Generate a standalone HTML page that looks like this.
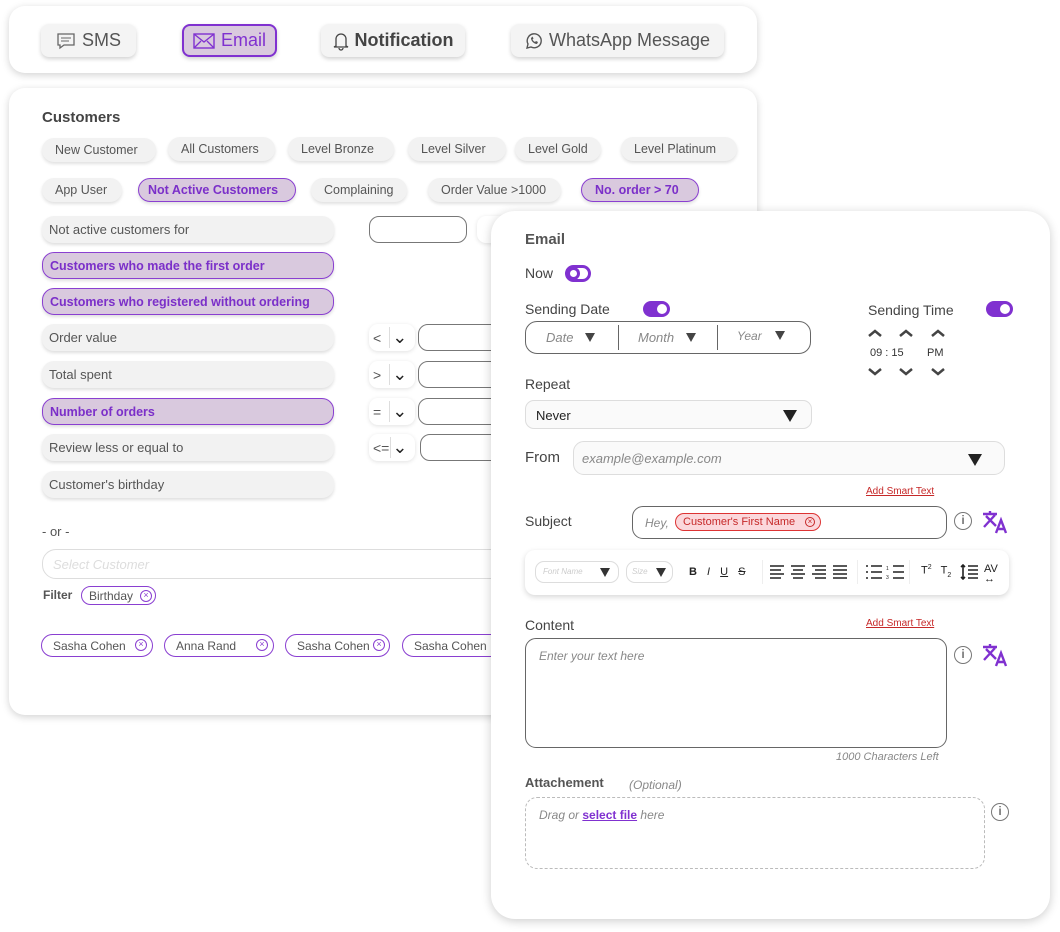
<!DOCTYPE html>
<html><head><meta charset="utf-8"><style>
*{box-sizing:border-box;margin:0;padding:0}
body{width:1060px;height:932px;background:#fff;font-family:"Liberation Sans",sans-serif;position:relative;overflow:hidden;color:#444}
.a{position:absolute}
.card{position:absolute;background:#fff;border-radius:16px;box-shadow:0 2px 8px rgba(0,0,0,.18)}
.tb{position:absolute;top:24px;height:33px;border-radius:8px;background:#f4f4f4;box-shadow:0 2px 4px rgba(0,0,0,.18);font-size:18px;color:#555;display:flex;align-items:center;justify-content:center;gap:6px}
.chip{position:absolute;height:24px;border-radius:12px;background:#f2f2f2;box-shadow:0 2px 3px rgba(0,0,0,.12);font-size:12.5px;color:#555;display:flex;align-items:center;padding-left:13px}
.row{position:absolute;left:42px;width:292px;height:27px;border-radius:12px;background:#f2f2f2;box-shadow:0 2px 3px rgba(0,0,0,.13);font-size:13px;color:#555;padding-left:7px;display:flex;align-items:center}
.sel{background:#d9c9de !important;border:1.5px solid #8a3fd1;color:#7b2fc9 !important;font-weight:bold;font-size:12.5px !important}
.op{position:absolute;left:369px;width:46px;height:27px;border-radius:9px;background:#fff;box-shadow:0 1px 4px rgba(0,0,0,.12);font-size:14px;color:#555;padding-left:4px;display:flex;align-items:center}
.inp{position:absolute;left:418px;width:90px;height:27px;border:1px solid #777;border-radius:10px}
.pc{position:absolute;top:634px;height:23px;border:1.5px solid #8a3fd1;border-radius:12px;font-size:12px;color:#555;padding-left:11px;display:flex;align-items:center}
.x{position:absolute;width:12px;height:12px;border:1.3px solid #8a3fd1;border-radius:50%;font-size:9px;line-height:9px;text-align:center;color:#8a3fd1}
.lbl{position:absolute;font-size:14px;color:#444}
.tog{position:absolute;width:27px;height:16px;border-radius:8px;background:#8031d0}
.tog:after{content:"";position:absolute;right:3px;top:3px;width:10px;height:10px;border-radius:50%;background:#fff}
.info{position:absolute;width:18px;height:18px;border:1.5px solid #777;border-radius:50%;font-size:12px;color:#777;text-align:center;line-height:15px;font-weight:bold}
.smart{position:absolute;font-size:10px;color:#c62828;text-decoration:underline}
.tri{display:inline-block;width:0;height:0;border-left:5px solid transparent;border-right:5px solid transparent;border-top:9px solid #333}
.al{position:absolute;top:566px}
</style></head><body>

<div class="card" style="left:9px;top:6px;width:748px;height:67px"></div>
<div class="tb" style="left:41px;width:95px"><svg width="20" height="18" viewBox="0 0 20 18"><path d="M2 2h16v11H8l-4 3v-3H2z" fill="none" stroke="#666" stroke-width="1.3"/><path d="M5 6h10M5 9h8" stroke="#666"/></svg>SMS</div>
<div class="tb" style="left:182px;width:95px;background:#d9c9de;border:2px solid #8031d0;color:#8031d0"><svg width="22" height="16" viewBox="0 0 22 16"><rect x="1" y="1" width="20" height="14" fill="none" stroke="#8031d0" stroke-width="1.4"/><path d="M1 1l10 8 10-8M1 15l7-7M21 15l-7-7" fill="none" stroke="#8031d0" stroke-width="1.3"/></svg>Email</div>
<div class="tb" style="left:321px;width:144px;font-weight:bold;color:#444"><svg width="16" height="20" viewBox="0 0 16 20"><path d="M3 15V8a5 5 0 0110 0v7l2 1H1zM6 17a2 2 0 004 0" fill="none" stroke="#444" stroke-width="1.3"/></svg>Notification</div>
<div class="tb" style="left:511px;width:213px"><svg width="18" height="18" viewBox="0 0 18 18"><path d="M2 16l1-4a7 7 0 113 3z" fill="none" stroke="#555" stroke-width="1.4"/><path d="M6 6c0 3 3 6 6 6l1-2-2-1-1 1c-1-.5-2-1.5-2.5-2.5l1-1-1-2z" fill="#555"/></svg>WhatsApp Message</div>

<div class="card" style="left:9px;top:88px;width:748px;height:627px"></div>
<div class="a" style="left:42px;top:109px;font-size:15px;font-weight:bold;color:#444">Customers</div>
<div class="chip" style="left:42px;top:138px;width:114px">New Customer</div>
<div class="chip" style="left:168px;top:137px;width:107px">All Customers</div>
<div class="chip" style="left:288px;top:137px;width:106px">Level Bronze</div>
<div class="chip" style="left:408px;top:137px;width:98px">Level Silver</div>
<div class="chip" style="left:515px;top:137px;width:86px">Level Gold</div>
<div class="chip" style="left:621px;top:137px;width:116px">Level Platinum</div>
<div class="chip" style="left:42px;top:178px;width:80px">App User</div>
<div class="chip sel" style="left:138px;top:178px;width:158px;padding-left:9px">Not Active Customers</div>
<div class="chip" style="left:311px;top:178px;width:96px">Complaining</div>
<div class="chip" style="left:428px;top:178px;width:133px">Order Value &gt;1000</div>
<div class="chip sel" style="left:581px;top:178px;width:118px">No. order &gt; 70</div>

<div class="row" style="top:216px">Not active customers for</div>
<div class="row sel" style="top:252px">Customers who made the first order</div>
<div class="row sel" style="top:288px">Customers who registered without ordering</div>
<div class="row" style="top:324px">Order value</div>
<div class="row" style="top:361px">Total spent</div>
<div class="row sel" style="top:398px">Number of orders</div>
<div class="row" style="top:434px">Review less or equal to</div>
<div class="row" style="top:471px">Customer's birthday</div>

<div class="a" style="left:369px;top:216px;width:98px;height:27px;border:1px solid #777;border-radius:10px"></div>
<div class="a" style="left:477px;top:216px;width:30px;height:27px;border-radius:9px;background:#fff;box-shadow:0 1px 4px rgba(0,0,0,.12)"></div>
<div class="op" style="top:324px">&lt; <span style="margin-left:8px;border-left:1px solid #ddd;padding-left:2px;font-size:18px;color:#222">&#x2304;</span></div>
<div class="op" style="top:361px">&gt; <span style="margin-left:8px;border-left:1px solid #ddd;padding-left:2px;font-size:18px;color:#222">&#x2304;</span></div>
<div class="op" style="top:398px">= <span style="margin-left:8px;border-left:1px solid #ddd;padding-left:2px;font-size:18px;color:#222">&#x2304;</span></div>
<div class="op" style="top:434px">&lt;=<span style="margin-left:1px;border-left:1px solid #ddd;padding-left:1px;font-size:18px;color:#222">&#x2304;</span></div>
<div class="inp" style="top:324px"></div>
<div class="inp" style="top:361px"></div>
<div class="inp" style="top:398px"></div>
<div class="inp" style="top:434px;left:420px"></div>

<div class="a" style="left:42px;top:524px;font-size:13px;color:#555">- or -</div>
<div class="a" style="left:42px;top:549px;width:470px;height:30px;border:1px solid #ddd;border-radius:14px;font-size:13px;color:#ddd;font-style:italic;padding:7px 10px">Select Customer</div>
<div class="a" style="left:43px;top:588px;font-size:12px;font-weight:bold;color:#555">Filter</div>
<div class="pc" style="left:81px;top:586px;width:75px;height:19px;padding-left:7px">Birthday<span class="x" style="left:58px;top:3px">×</span></div>
<div class="pc" style="left:41px;width:112px">Sasha Cohen<span class="x" style="left:93px;top:4px">×</span></div>
<div class="pc" style="left:164px;width:110px">Anna Rand<span class="x" style="left:91px;top:4px">×</span></div>
<div class="pc" style="left:285px;width:105px">Sasha Cohen<span class="x" style="left:87px;top:4px">×</span></div>
<div class="pc" style="left:402px;width:100px">Sasha Cohen</div>

<div class="card" style="left:491px;top:211px;width:559px;height:708px;border-radius:24px;box-shadow:0 2px 10px rgba(0,0,0,.2)"></div>
<div class="a" style="left:525px;top:231px;font-size:15px;font-weight:bold;color:#555">Email</div>
<div class="lbl" style="left:525px;top:265px">Now</div>
<div class="a" style="left:565px;top:265px;width:26px;height:17px;border:3px solid #8031d0;border-radius:9px"><div style="position:absolute;left:-1px;top:-1px;width:13px;height:13px;border:3px solid #8031d0;border-radius:50%"></div></div>
<div class="lbl" style="left:525px;top:301px">Sending Date</div>
<div class="tog" style="left:643px;top:301px"></div>
<div class="a" style="left:525px;top:321px;width:286px;height:33px;border:1.3px solid #666;border-radius:12px;font-size:13px;color:#888;font-style:italic">
<span class="a" style="left:20px;top:8px">Date <span class="tri" style="margin-left:8px;border-top-color:#444"></span></span>
<span class="a" style="left:92px;top:3px;height:25px;border-left:1.3px solid #666"></span>
<span class="a" style="left:112px;top:8px">Month <span class="tri" style="margin-left:8px;border-top-color:#444"></span></span>
<span class="a" style="left:191px;top:3px;height:25px;border-left:1.3px solid #666"></span>
<span class="a" style="left:211px;top:7px;font-size:12px">Year <span class="tri" style="margin-left:10px;border-top-color:#444"></span></span>
</div>
<div class="lbl" style="left:868px;top:302px">Sending Time</div>
<div class="tog" style="left:986px;top:301px"></div>
<svg class="a" style="left:866px;top:326px" width="90" height="52" viewBox="0 0 90 52"><g fill="none" stroke="#444" stroke-width="2.5"><path d="M3 10l6-5 6 5M34 10l6-5 6 5M66 10l6-5 6 5M3 43l6 5 6-5M34 43l6 5 6-5M66 43l6 5 6-5"/></g><text x="4" y="30" font-size="11" font-family="Liberation Sans" fill="#333">09  :  15</text><text x="61" y="30" font-size="11" font-family="Liberation Sans" fill="#333">PM</text></svg>
<div class="lbl" style="left:525px;top:376px">Repeat</div>
<div class="a" style="left:525px;top:400px;width:287px;height:29px;border:1px solid #ddd;border-radius:9px;background:#fafafa;font-size:13px;color:#222;padding:7px 10px">Never<span class="tri" style="position:absolute;right:14px;top:9px;border-width:12px 7px 0;border-top-color:#222"></span></div>
<div class="lbl" style="left:525px;top:449px;font-size:15px">From</div>
<div class="a" style="left:573px;top:441px;width:432px;height:34px;border:1px solid #ddd;border-radius:11px;background:#fafafa;font-size:13px;color:#888;font-style:italic;padding:9px 8px">example@example.com<span class="tri" style="position:absolute;right:22px;top:12px;border-width:12px 7px 0;border-top-color:#222"></span></div>
<div class="smart" style="left:866px;top:486px">Add Smart Text</div>
<div class="lbl" style="left:525px;top:513px">Subject</div>
<div class="a" style="left:632px;top:506px;width:315px;height:33px;border:1.3px solid #666;border-radius:11px;font-size:12px;color:#888;font-style:italic;padding:9px 12px">Hey,</div>
<div class="a" style="left:675px;top:513px;width:146px;height:18px;border:1px solid #d33;border-radius:9px;background:#fbd8dc;font-size:11px;color:#c62828;padding:2px 7px">Customer's First Name<span style="position:absolute;right:5px;top:3px;width:10px;height:10px;border:1px solid #c62828;border-radius:50%;font-size:8px;line-height:8px;text-align:center">×</span></div>
<div class="info" style="left:954px;top:512px">i</div>
<svg class="a" style="left:982px;top:510px" width="28" height="24" viewBox="0 0 28 24"><g fill="none" stroke="#8031d0" stroke-width="2.4"><path d="M1 4h14M8 1v3M2 17l11-12M4 6l10 10"/><path d="M14 23l5-13 5 13M16 19h7"/></g></svg>
<div class="a" style="left:525px;top:550px;width:484px;height:45px;border-radius:10px;background:#fff;box-shadow:0 2px 6px rgba(0,0,0,.16)"></div>
<div class="a" style="left:535px;top:561px;width:84px;height:22px;border:1px solid #ddd;border-radius:9px;font-size:8px;color:#ccc;font-style:italic;padding:5px 7px">Font Name<span class="tri" style="position:absolute;right:8px;top:6px;border-width:9px 5px 0"></span></div>
<div class="a" style="left:626px;top:561px;width:47px;height:22px;border:1px solid #ddd;border-radius:9px;font-size:8px;color:#ccc;font-style:italic;padding:5px 5px">Size<span class="tri" style="position:absolute;right:6px;top:6px;border-width:9px 5px 0"></span></div>
<div class="a" style="left:689px;top:566px;font-size:11px;color:#222;word-spacing:7px"><b>B</b> <i>I</i> <u>U</u> <s>S</s></div>
<div class="a" style="left:762px;top:560px;height:24px;border-left:1px solid #eee"></div>
<svg class="a" style="left:770px;top:565px" width="80" height="14" viewBox="0 0 80 14"><g stroke="#222" stroke-width="1.6"><path d="M0 1h14M0 5h11M0 9h14M0 13h11"/><path d="M21 1h14M23 5h10M21 9h14M23 13h10"/><path d="M42 1h14M45 5h11M42 9h14M45 13h11"/><path d="M63 1h14M63 5h14M63 9h14M63 13h14"/></g></svg>
<div class="a" style="left:857px;top:560px;height:24px;border-left:1px solid #eee"></div>
<svg class="a" style="left:866px;top:565px" width="40" height="14" viewBox="0 0 40 14"><g stroke="#222" stroke-width="1.6"><path d="M0 1h2M0 7h2M0 13h2M5 1h11M5 7h11M5 13h11M27 1h11M27 7h11M27 13h11"/></g><text x="20" y="14" font-size="5" fill="#222">3</text><text x="20" y="5" font-size="5" fill="#222">1</text></svg>
<div class="a" style="left:909px;top:560px;height:24px;border-left:1px solid #eee"></div>
<div class="a" style="left:921px;top:564px;font-size:11px;color:#222">T<sup style="font-size:7px">2</sup>&nbsp;&nbsp; T<sub style="font-size:7px">2</sub></div>
<svg class="a" style="left:960px;top:564px" width="18" height="16" viewBox="0 0 18 16"><g stroke="#222" stroke-width="1.6" fill="none"><path d="M3 1v14M1 3l2-2 2 2M1 13l2 2 2-2M8 2h10M8 6h10M8 10h10M8 14h10"/></g></svg>
<div class="a" style="left:984px;top:564px;font-size:11px;color:#222;line-height:10px">AV<br>&#8596;</div>
<div class="lbl" style="left:525px;top:617px">Content</div>
<div class="smart" style="left:866px;top:618px">Add Smart Text</div>
<div class="a" style="left:525px;top:638px;width:422px;height:110px;border:1.3px solid #666;border-radius:11px;font-size:12px;color:#888;font-style:italic;padding:10px 13px">Enter your text here</div>
<div class="info" style="left:954px;top:646px">i</div>
<svg class="a" style="left:982px;top:643px" width="28" height="24" viewBox="0 0 28 24"><g fill="none" stroke="#8031d0" stroke-width="2.4"><path d="M1 4h14M8 1v3M2 17l11-12M4 6l10 10"/><path d="M14 23l5-13 5 13M16 19h7"/></g></svg>
<div class="a" style="left:836px;top:751px;font-size:11px;color:#888;font-style:italic">1000 Characters Left</div>
<div class="lbl" style="left:525px;top:775px;font-weight:bold;color:#555;font-size:13px">Attachement</div>
<div class="a" style="left:629px;top:778px;font-size:12px;color:#888;font-style:italic">(Optional)</div>
<div class="a" style="left:525px;top:797px;width:460px;height:72px;border:1.5px dashed #bbb;border-radius:12px;font-size:12px;color:#888;font-style:italic;padding:10px 13px">Drag or <span style="color:#8031d0;text-decoration:underline;font-style:normal;font-weight:bold">select file</span> here</div>
<div class="info" style="left:991px;top:803px">i</div>
</body></html>
